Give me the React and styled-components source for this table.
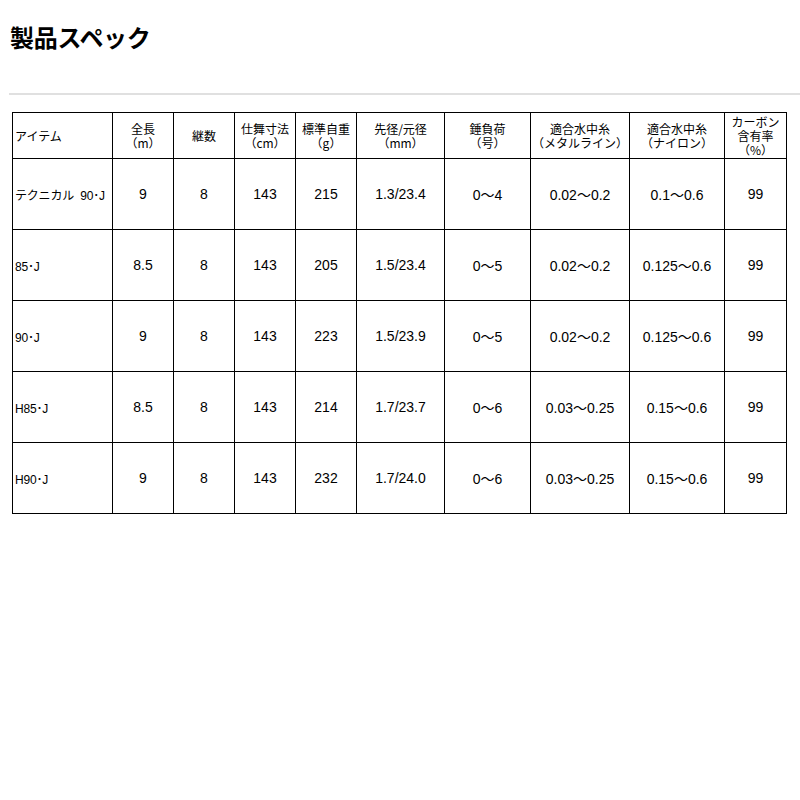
import React from "react";
import styled, { createGlobalStyle } from "styled-components";

const Global = createGlobalStyle`
  html, body { margin: 0; padding: 0; background: #fff; }
  body { font-family: "Liberation Sans", "Noto Sans CJK JP", sans-serif; color: #000; }
`;

const Page = styled.div`
  width: 800px;
  padding-top: 22px;
`;

const Title = styled.h2`
  margin: 0 0 0 10px;
  font-family: "Noto Sans CJK JP", sans-serif;
  font-weight: 700;
  font-size: 24px;
  line-height: 30px;
  letter-spacing: -0.3px;
`;

const Rule = styled.hr`
  margin: 41px 0 0 9px;
  border: 0;
  height: 2px;
  background: #e0e0e0;
`;

const Table = styled.table`
  margin: 17px 0 0 12px;
  border-collapse: collapse;
  table-layout: fixed;
  width: 775px;
`;

const Head = styled.th`
  border: 1px solid #000;
  height: 45px;
  padding: 0;
  font-weight: 400;
  font-size: 12px;
  line-height: 14px;
  text-align: ${(p) => (p.$left ? "left" : "center")};
  padding-left: ${(p) => (p.$left ? "2px" : "0")};
  font-family: "Noto Sans CJK JP", sans-serif;
`;

const Line = styled.span`
  display: block;
  height: 14px;
  overflow: visible;
`;

const NameCell = styled.td`
  border: 1px solid #000;
  height: 70px;
  padding: 0 0 0 2px;
  font-size: 12px;
  letter-spacing: -0.2px;
  font-family: "Liberation Sans", "Noto Sans CJK JP", sans-serif;
  white-space: pre;
  overflow: hidden;
`;

const Cell = styled.td`
  border: 1px solid #000;
  padding: 0;
  text-align: center;
  font-size: 14px;
  font-family: "Liberation Sans", "Noto Sans CJK JP", sans-serif;
`;

const widths = [100, 61, 61, 61, 61, 88, 86, 99, 95, 62];

const headers = [
  ["アイテム"],
  ["全長", "（m）"],
  ["継数"],
  ["仕舞寸法", "（cm）"],
  ["標準自重", "（g）"],
  ["先径/元径", "（mm）"],
  ["錘負荷", "（号）"],
  ["適合水中糸", "（メタルライン）"],
  ["適合水中糸", "（ナイロン）"],
  ["カーボン", "含有率", "（%）"],
];

const rows = [
  ["テクニカル  90･J", "9", "8", "143", "215", "1.3/23.4", "0～4", "0.02～0.2", "0.1～0.6", "99"],
  ["85･J", "8.5", "8", "143", "205", "1.5/23.4", "0～5", "0.02～0.2", "0.125～0.6", "99"],
  ["90･J", "9", "8", "143", "223", "1.5/23.9", "0～5", "0.02～0.2", "0.125～0.6", "99"],
  ["H85･J", "8.5", "8", "143", "214", "1.7/23.7", "0～6", "0.03～0.25", "0.15～0.6", "99"],
  ["H90･J", "9", "8", "143", "232", "1.7/24.0", "0～6", "0.03～0.25", "0.15～0.6", "99"],
];

export default function App() {
  return (
    <Page>
      <Global />
      <Title>製品スペック</Title>
      <Rule />
      <Table>
        <colgroup>
          {widths.map((w, i) => (
            <col key={i} style={{ width: w }} />
          ))}
        </colgroup>
        <thead>
          <tr>
            {headers.map((h, i) => (
              <Head key={i} $left={i === 0}>
                {h.map((line, j) => (
                  <Line key={j}>{line}</Line>
                ))}
              </Head>
            ))}
          </tr>
        </thead>
        <tbody>
          {rows.map((r, i) => (
            <tr key={i}>
              <NameCell>{r[0]}</NameCell>
              {r.slice(1).map((v, j) => (
                <Cell key={j}>{v}</Cell>
              ))}
            </tr>
          ))}
        </tbody>
      </Table>
    </Page>
  );
}
